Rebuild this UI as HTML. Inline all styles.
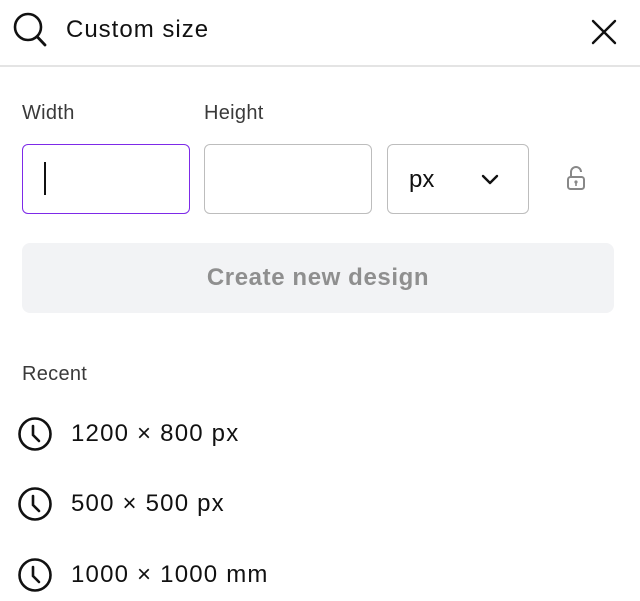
<!DOCTYPE html>
<html><head><style>
body{margin:0;width:640px;height:601px;background:#fff;font-family:"Liberation Sans",sans-serif;position:relative;overflow:hidden;color:#111}
.a{position:absolute}
.box{position:absolute;border:1.5px solid #bdbdbd;border-radius:6px;box-sizing:border-box;height:70px;top:144px}
.lbl{position:absolute;top:102px;font-size:20px;color:#3a3a3a;letter-spacing:0.3px}
.row{position:absolute;left:71px;font-size:24px;color:#111;letter-spacing:1.2px}
</style></head><body>
<svg class="a" style="left:12px;top:12px" width="36" height="36" viewBox="0 0 36 36"><circle cx="16" cy="15" r="13" fill="none" stroke="#111" stroke-width="2.6"/><line x1="25" y1="24.5" x2="33" y2="33" stroke="#111" stroke-width="2.8" stroke-linecap="round"/></svg>
<div class="a" style="left:66px;top:16px;font-size:24px;color:#111;letter-spacing:1px">Custom size</div>
<svg class="a" style="left:590px;top:18px" width="28" height="28" viewBox="0 0 28 28"><path d="M3 3L25 25M25 3L3 25" stroke="#111" stroke-width="2.4" stroke-linecap="round"/></svg>
<div class="a" style="left:0;top:65px;width:640px;height:2px;background:#e4e4e4"></div>
<div class="lbl" style="left:22px">Width</div>
<div class="lbl" style="left:204px">Height</div>
<div class="box" style="left:22px;width:168px;border-color:#7d2ae8"></div>
<div class="a" style="left:44px;top:162px;width:2px;height:33px;background:#111"></div>
<div class="box" style="left:204px;width:168px"></div>
<div class="box" style="left:387px;width:142px"></div>
<div class="a" style="left:409px;top:166px;font-size:24px">px</div>
<svg class="a" style="left:480px;top:172px" width="20" height="14" viewBox="0 0 20 14"><path d="M3 4L10 11L17 4" fill="none" stroke="#111" stroke-width="2.4" stroke-linecap="round" stroke-linejoin="round"/></svg>
<svg class="a" style="left:565px;top:164px" width="24" height="28" viewBox="0 0 24 28"><path d="M6 13V8a5 5 0 0 1 10 0" fill="none" stroke="#888" stroke-width="2"/><rect x="3" y="13" width="16" height="12" rx="2.5" fill="none" stroke="#888" stroke-width="2"/><circle cx="11" cy="18" r="1.6" fill="#888"/><rect x="10.2" y="18" width="1.6" height="4" fill="#888"/></svg>
<div class="a" style="left:22px;top:243px;width:592px;height:70px;background:#f2f3f5;border-radius:8px;text-align:center;line-height:70px;font-size:24px;color:#8f8f8f;font-weight:bold;letter-spacing:0.6px">Create new design</div>
<div class="a" style="left:22px;top:363px;font-size:20px;color:#3a3a3a;letter-spacing:0.3px">Recent</div>
<svg class="a" style="left:17px;top:417px" width="36" height="36" viewBox="0 0 36 36"><circle cx="18" cy="17" r="15.5" fill="none" stroke="#111" stroke-width="2.6"/><path d="M16 9V18L22 24" fill="none" stroke="#111" stroke-width="2.6" stroke-linecap="round"/></svg>
<div class="row" style="top:420px">1200 × 800 px</div>
<svg class="a" style="left:17px;top:487px" width="36" height="36" viewBox="0 0 36 36"><circle cx="18" cy="17" r="15.5" fill="none" stroke="#111" stroke-width="2.6"/><path d="M16 9V18L22 24" fill="none" stroke="#111" stroke-width="2.6" stroke-linecap="round"/></svg>
<div class="row" style="top:490px">500 × 500 px</div>
<svg class="a" style="left:17px;top:558px" width="36" height="36" viewBox="0 0 36 36"><circle cx="18" cy="17" r="15.5" fill="none" stroke="#111" stroke-width="2.6"/><path d="M16 9V18L22 24" fill="none" stroke="#111" stroke-width="2.6" stroke-linecap="round"/></svg>
<div class="row" style="top:561px">1000 × 1000 mm</div>
</body></html>
